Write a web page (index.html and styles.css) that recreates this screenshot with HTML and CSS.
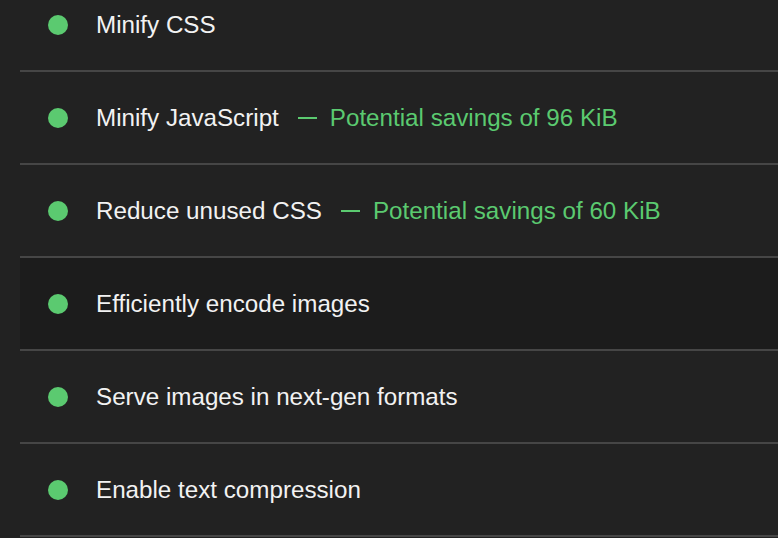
FILE: index.html
```html
<!DOCTYPE html>
<html lang="en">
<head>
  <meta charset="UTF-8" />
  <meta name="viewport" content="width=device-width, initial-scale=1.0" />
  <title>Opportunities</title>
  <link rel="stylesheet" href="styles.css">
</head>
<body>
  <div class="audits">
    <div class="audit">
      <span class="dot"></span>
      <span class="title">Minify CSS</span>
    </div>
    <div class="audit">
      <span class="dot"></span>
      <span class="title">Minify JavaScript</span>
      <span class="display-text">Potential savings of 96 KiB</span>
    </div>
    <div class="audit">
      <span class="dot"></span>
      <span class="title">Reduce unused CSS</span>
      <span class="display-text">Potential savings of 60 KiB</span>
    </div>
    <div class="audit hover">
      <span class="dot"></span>
      <span class="title">Efficiently encode images</span>
    </div>
    <div class="audit">
      <span class="dot"></span>
      <span class="title">Serve images in next-gen formats</span>
    </div>
    <div class="audit">
      <span class="dot"></span>
      <span class="title">Enable text compression</span>
    </div>
  </div>
</body>
</html>
```

FILE: styles.css
```css
html, body {
  margin: 0;
  padding: 0;
  background-color: #222222;
  overflow: hidden;
}
body {
  font-family: "Liberation Sans", Arial, sans-serif;
  color: #f2f2f2;
  font-size: 24.2px;
}
.audits {
  margin-top: -21px;
  padding-left: 20px;
}
.audit {
  display: flex;
  align-items: center;
  height: 91px;
  padding-left: 28px;
  border-bottom: 2px solid #464646;
}
.audit.hover {
  background-color: #1c1c1c;
}
.dot {
  width: 20px;
  height: 20px;
  border-radius: 50%;
  background-color: #5bca70;
  flex-shrink: 0;
  margin-right: 28px;
}
.title {
  line-height: 29px;
}
.display-text {
  color: #5bca70;
  margin-left: 19px;
  line-height: 29px;
}
.display-text::before {
  content: "";
  display: inline-block;
  width: 19px;
  height: 2px;
  background-color: #5bca70;
  vertical-align: 7px;
  margin-right: 13px;
}
```
